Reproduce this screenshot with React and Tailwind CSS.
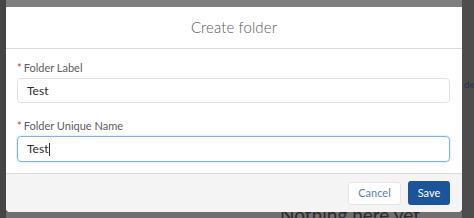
import React from "react";

export default function App() {
  const font = { fontFamily: "Lato, 'Open Sans', 'Liberation Sans', sans-serif" };
  return (
    <div className="w-[474px] h-[218px] overflow-hidden flex bg-[#474747]" style={font}>
      <div className="w-[6px] shrink-0 bg-[#454545]" />
      <div className="w-[456px] shrink-0 flex flex-col">
        <div className="h-[7px] shrink-0 bg-[#7f7f7f]" />
        <div className="bg-white rounded-b-[4px] flex flex-col shrink-0">
          <div className="h-[42px] flex items-center justify-center border-b border-[#dddbda]">
            <span className="text-[15px] text-[#5a5a5a] font-light tracking-[0.1px]">Create folder</span>
          </div>
          <div className="pl-[11px] pr-[12px] pt-[12px] pb-[11px] flex flex-col">
            <div className="text-[11px] leading-[14px] text-[#5c5c5c]">
              <span className="text-[#c23934] mr-[2px]">*</span>Folder Label
            </div>
            <div className="mt-[3px] h-[25px] border border-[#e2e2e2] rounded-[4px] flex items-center pl-[9px] text-[12px] text-[#2b2b2b]">
              Test
            </div>
            <div className="mt-[16px] text-[11px] leading-[14px] text-[#5c5c5c]">
              <span className="text-[#c23934] mr-[2px]">*</span>Folder Unique Name
            </div>
            <div className="mt-[3px] h-[26px] border border-[#7fb3e6] rounded-[4px] flex items-center pl-[9px] text-[12px] text-[#2b2b2b] shadow-[0_0_2px_#a9cdf0]">
              Test<span className="inline-block w-px h-[13px] bg-[#333] ml-px" />
            </div>
          </div>
          <div className="h-[39px] border-t border-[#dddbda] bg-[#f4f4f4] rounded-b-[4px] flex items-center justify-end gap-[7px] pr-[12px]">
            <div className="w-[53px] h-[23px] bg-white border border-[#e6e6e6] rounded-[3px] flex items-center justify-center text-[11px] text-[#5a7fb0]">
              Cancel
            </div>
            <div className="w-[42px] h-[24px] bg-[#1c5499] rounded-[3px] flex items-center justify-center text-[11px] text-white">
              Save
            </div>
          </div>
        </div>
        <div className="flex-1 bg-[#707070] overflow-hidden relative">
          <div className="absolute left-[274px] top-[-7px] text-[19px] leading-none text-[#2a2a2a] whitespace-nowrap">
            Nothing here yet
          </div>
        </div>
      </div>
      <div className="flex-1 bg-[#4d4d4d] flex flex-col">
        <div className="mt-[79px] text-[10px] text-[#26334d] leading-none whitespace-nowrap pl-[2px]">de</div>
      </div>
    </div>
  );
}
